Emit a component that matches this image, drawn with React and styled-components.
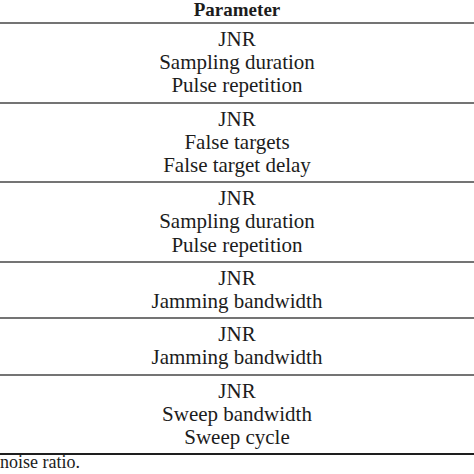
import React from "react";
import styled, { createGlobalStyle } from "styled-components";

const GlobalStyle = createGlobalStyle`
    html, body {
        margin: 0;
        padding: 0;
        background: #ffffff;
        overflow: hidden;
    }
`;

export const Page = styled.div`
    width: 474px;
    height: 474px;
    overflow: hidden;
    font-family: "Liberation Serif", "Times New Roman", serif;
    color: #1c1c1c;
`;

export const Table = styled.div`
    display: flex;
    flex-direction: column;
`;

export const HeaderCell = styled.div`
    font-size: 19px;
    font-weight: bold;
    line-height: 19px;
    text-align: center;
    padding: 0 0 3px;
    border-bottom: 2px solid #747474;
`;

export const Row = styled.div`
    display: flex;
    flex-direction: column;
    align-items: center;
    padding: 4px 0;
    font-size: 21px;
    line-height: 23.2px;
    border-bottom: 2px solid ${({ $last }) => ($last ? "#1e1e1e" : "#747474")};
`;

export const Line = styled.span`
    white-space: nowrap;
`;

export const Note = styled.div`
    font-size: 18px;
    line-height: 18px;
    margin-top: -2px;
    white-space: nowrap;
`;

const rows = [
    ["JNR", "Sampling duration", "Pulse repetition"],
    ["JNR", "False targets", "False target delay"],
    ["JNR", "Sampling duration", "Pulse repetition"],
    ["JNR", "Jamming bandwidth"],
    ["JNR", "Jamming bandwidth"],
    ["JNR", "Sweep bandwidth", "Sweep cycle"],
];

const App = () => {
    return (
        <Page>
            <GlobalStyle/>
            <Table>
                <HeaderCell>Parameter</HeaderCell>
                {rows.map((lines, index) => (
                    <Row key={index} $last={index === rows.length - 1}>
                        {lines.map((text, i) => (
                            <Line key={i}>{text}</Line>
                        ))}
                    </Row>
                ))}
            </Table>
            <Note>noise ratio.</Note>
        </Page>
    );
};

export default App;
